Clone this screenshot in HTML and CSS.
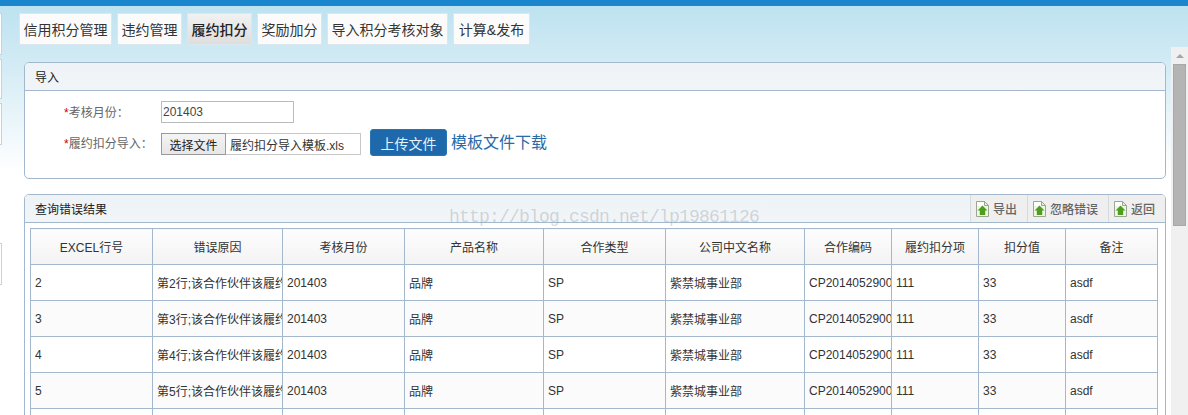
FILE: index.html
```html
<!DOCTYPE html>
<html lang="zh-CN">
<head>
<meta charset="utf-8">
<title>履约扣分</title>
<link rel="stylesheet" href="styles.css">
</head>
<body>
<div class="topbar"></div>
<div class="edge edge-a"></div>
<div class="edge edge-b"></div>
<div class="edge edge-c"></div>
<div class="edge edge-d"></div>
<nav class="tabs">
  <a class="tab t1">信用积分管理</a>
  <a class="tab t2">违约管理</a>
  <a class="tab t3 active">履约扣分</a>
  <a class="tab t4">奖励加分</a>
  <a class="tab t5">导入积分考核对象</a>
  <a class="tab t6">计算&amp;发布</a>
</nav>
<main class="content">
  <section class="panel import-panel">
    <header class="panel-head"><h2>导入</h2></header>
    <div class="form">
      <div class="form-row row-month">
        <label class="label"><i>*</i>考核月份<span class="colon">：</span></label>
        <input class="text-input" type="text" value="201403">
      </div>
      <div class="form-row row-file">
        <label class="label"><i>*</i>履约扣分导入<span class="colon">：</span></label>
        <div class="file-box"><span class="file-btn">选择文件</span><span class="file-name">履约扣分导入模板.xls</span></div>
        <button class="upload" type="button">上传文件</button>
        <a class="download">模板文件下载</a>
      </div>
    </div>
  </section>
  <section class="panel result-panel">
    <header class="panel-head">
      <h2>查询错误结果</h2>
      <div class="tools">
        <a class="tool"><svg class="ico" viewBox="0 0 13 16"><path class="sheet" d="M.5.5h8l4 4v11H.5z"/><path class="tint" d="M1 5h11v10H1z"/><path class="fold" d="M8.500.5v4h4z"/><path class="arrow" d="M6.500 4.500l5 5H9.200V14H3.800V9.500H1.500z"/></svg>导出</a>
        <a class="tool"><svg class="ico" viewBox="0 0 13 16"><path class="sheet" d="M.5.5h8l4 4v11H.5z"/><path class="tint" d="M1 5h11v10H1z"/><path class="fold" d="M8.500.5v4h4z"/><path class="arrow" d="M6.500 4.500l5 5H9.200V14H3.800V9.500H1.500z"/></svg>忽略错误</a>
        <a class="tool"><svg class="ico" viewBox="0 0 13 16"><path class="sheet" d="M.5.5h8l4 4v11H.5z"/><path class="tint" d="M1 5h11v10H1z"/><path class="fold" d="M8.500.5v4h4z"/><path class="arrow" d="M6.500 4.500l5 5H9.200V14H3.800V9.500H1.500z"/></svg>返回</a>
      </div>
    </header>
    <div class="table-wrap">
      <table>
        <colgroup>
          <col class="c1"><col class="c2"><col class="c3"><col class="c4"><col class="c5"><col class="c6"><col class="c7"><col class="c8"><col class="c9"><col class="c10">
        </colgroup>
        <thead>
          <tr><th>EXCEL行号</th><th>错误原因</th><th>考核月份</th><th>产品名称</th><th>合作类型</th><th>公司中文名称</th><th>合作编码</th><th>履约扣分项</th><th>扣分值</th><th>备注</th></tr>
        </thead>
        <tbody>
          <tr><td>2</td><td>第2行;该合作伙伴该履约</td><td>201403</td><td>品牌</td><td>SP</td><td>紫禁城事业部</td><td>CP20140529000</td><td>111</td><td>33</td><td>asdf</td></tr>
          <tr><td>3</td><td>第3行;该合作伙伴该履约</td><td>201403</td><td>品牌</td><td>SP</td><td>紫禁城事业部</td><td>CP20140529000</td><td>111</td><td>33</td><td>asdf</td></tr>
          <tr><td>4</td><td>第4行;该合作伙伴该履约</td><td>201403</td><td>品牌</td><td>SP</td><td>紫禁城事业部</td><td>CP20140529000</td><td>111</td><td>33</td><td>asdf</td></tr>
          <tr><td>5</td><td>第5行;该合作伙伴该履约</td><td>201403</td><td>品牌</td><td>SP</td><td>紫禁城事业部</td><td>CP20140529000</td><td>111</td><td>33</td><td>asdf</td></tr>
          <tr><td></td><td></td><td></td><td></td><td></td><td></td><td></td><td></td><td></td><td></td></tr>
        </tbody>
      </table>
    </div>
  </section>
</main>
<div class="watermark">http://blog.csdn.net/lp19861126</div>
<div class="scrollbar"><span class="scroll-up"></span><span class="scroll-thumb"></span></div>
</body>
</html>
```
FILE: styles.css
```css
* { box-sizing: border-box; }
html, body { margin: 0; height: 415px; overflow: hidden; }
body {
  position: relative;
  font-family: "Liberation Sans", "Noto Sans CJK SC", sans-serif;
  font-size: 12px;
  color: #333;
  background: linear-gradient(#bde2f0 6px, #d5ecf5 70px, #fff 172px);
}
.topbar { height: 6px; background: #1a86cd; }
.edge { position: absolute; left: 0; width: 2px; background: #fff; border: 1px solid #c5d3de; border-left: 0; }
.edge-a { top: 13px; height: 42px; }
.edge-b { top: 59px; height: 40px; }
.edge-c { top: 103px; height: 42px; }
.edge-d { top: 243px; height: 42px; }

.tabs { display: flex; gap: 5px; padding: 7px 0 0 19px; height: 56px; }
.tab {
  height: 32px;
  display: flex; align-items: center; justify-content: center;
  font-size: 14px; color: #333;
  background: #fbfbfb;
  border: 1px solid #dbe7ed;
}
.t1 { width: 93px; } .t2 { width: 65px; } .t3 { width: 65px; } .t4 { width: 65px; } .t5 { width: 121px; } .t6 { width: 77px; }
.active { background: linear-gradient(#f1f1f1, #dedede); font-weight: 500; color: #222; }

.content { width: 1142px; margin-left: 24px; display: flex; flex-direction: column; gap: 15px; }
.panel { border: 1px solid #a3b8cc; border-radius: 5px; background: #fff; overflow: hidden; }
.panel-head {
  height: 28px; display: flex; align-items: center; justify-content: space-between;
  padding-left: 10px;
  background: linear-gradient(#eef3f7, #f1f5f7);
  border-bottom: 1px solid #a3b8cc;
}
.panel-head h2 { margin: 0; font-size: 12px; font-weight: 400; color: #222; }
.import-panel { height: 117px; }

.form { padding-top: 10px; }
.form-row { display: flex; align-items: center; }
.row-month { height: 22px; }
.row-file { height: 27px; margin-top: 6px; align-items: flex-start; }
.label { width: 136px; padding-left: 39px; font-size: 12px; line-height: 22px; color: #666; white-space: nowrap; }
.row-file .label { line-height: 27px; }
.label i { color: #c00; font-style: normal; }
.colon { font-family: "Noto Sans CJK TC", sans-serif; }
.text-input {
  width: 133px; height: 22px; padding: 0 1px; margin: 0;
  border: 1px solid #bbb; font: 12px "Liberation Sans", sans-serif; color: #444;
}
.file-box { width: 200px; height: 22px; margin-top: 4px; display: flex; align-items: center; border: 1px solid #c8c8c8; }
.file-btn {
  width: 65px; height: 22px; margin: -1px 0 -1px -1px; display: flex; align-items: center; justify-content: center;
  background: linear-gradient(#f4f4f4, #e6e6e6); border: 1px solid #9a9a9a;
  font-size: 12px; color: #222; flex: none;
}
.file-name { padding-left: 4px; font-size: 12px; color: #333; white-space: nowrap; }
.upload {
  width: 77px; height: 27px; margin: 0 0 0 9px; padding: 0;
  background: #1e69ab; color: #e8f1f8; border: 1px solid #2a74b4; border-radius: 3px;
  font: 14px "Liberation Sans", "Noto Sans CJK SC", sans-serif;
}
.download { margin-left: 4px; font-size: 16px; line-height: 27px; color: #276ba8; white-space: nowrap; }

.result-panel { height: 260px; }
.tools { display: flex; height: 27px; }
.tool {
  display: flex; align-items: center; gap: 4px; padding: 0 10px 0 5px;
  font-size: 12px; color: #666; font-weight: 500;
  border-left: 1px solid #d4dade;
  background: #efefef; white-space: nowrap;
}
.ico { width: 13px; height: 16px; flex: none; }
.sheet { fill: #fff; stroke: #9aa592; }
.tint { fill: #eef6e6; }
.fold { fill: #e8eee0; stroke: #9aa592; }
.arrow { fill: #4f9d1f; }

.table-wrap { padding: 5px 0 0 5px; }
table { border-collapse: collapse; table-layout: fixed; width: 1127px; font-size: 12px; }
.c1 { width: 122px; } .c2 { width: 130px; } .c3 { width: 122px; } .c4 { width: 139px; } .c5 { width: 122px; }
.c6 { width: 139px; } .c7 { width: 87px; } .c8 { width: 87px; } .c9 { width: 87px; } .c10 { width: 92px; }
th, td { border: 1px solid #a3b8cc; overflow: hidden; white-space: nowrap; color: #333; }
th { height: 36px; padding: 0; font-weight: 400; text-align: center; background: linear-gradient(#fdfdfd, #f3f3f3); }
td { height: 36px; padding: 0 0 0 4px; background: #fff; }
tbody tr:nth-child(even) td { background: #fbfbfb; }

.watermark {
  position: absolute; left: 449px; top: 205px;
  font: 18px/24px "Liberation Mono", monospace; letter-spacing: -.8px;
  color: rgba(120, 130, 140, .3); pointer-events: none;
}
.scrollbar { position: absolute; right: 0; top: 47px; width: 17px; height: 368px; background: #f0f0f0; }
.scroll-up {
  position: absolute; left: 5px; top: 7px; width: 0; height: 0;
  border: 4px solid transparent; border-top: 0; border-bottom: 4px solid #a6a6a6;
}
.scroll-thumb { position: absolute; left: 2px; top: 17px; width: 13px; height: 162px; background: #b4b4b4; border: 1px solid #a8a8a8; }
```
